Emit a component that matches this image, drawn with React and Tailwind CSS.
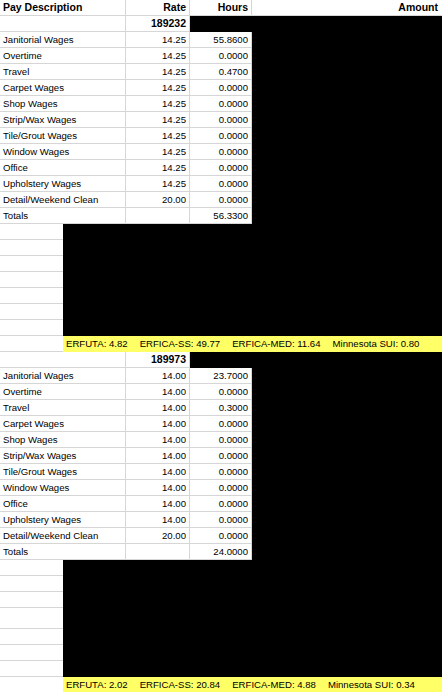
import React from "react"

const items = [
  "Janitorial Wages",
  "Overtime",
  "Travel",
  "Carpet Wages",
  "Shop Wages",
  "Strip/Wax Wages",
  "Tile/Grout Wages",
  "Window Wages",
  "Office",
  "Upholstery Wages",
  "Detail/Weekend Clean",
]

const employees = [
  {
    id: "189232",
    rate: "14.25",
    hours: ["55.8600", "0.0000", "0.4700", "0.0000", "0.0000", "0.0000", "0.0000", "0.0000", "0.0000", "0.0000", "0.0000"],
    total: "56.3300",
    blanks: [16, 16, 16, 16, 16, 16, 16],
    taxes: ["ERFUTA: 4.82", "ERFICA-SS: 49.77", "ERFICA-MED: 11.64", "Minnesota SUI: 0.80"],
  },
  {
    id: "189973",
    rate: "14.00",
    hours: ["23.7000", "0.0000", "0.3000", "0.0000", "0.0000", "0.0000", "0.0000", "0.0000", "0.0000", "0.0000", "0.0000"],
    total: "24.0000",
    blanks: [16, 16, 16, 21, 16, 16, 16],
    taxes: ["ERFUTA: 2.02", "ERFICA-SS: 20.84", "ERFICA-MED: 4.88", "Minnesota SUI: 0.34"],
  },
]

const cell = "h-full border-b border-r border-[#d6d6d6] px-[3px] flex items-center"

function Row({ children }) {
  return <div className="flex h-4 leading-none">{children}</div>
}

function Block({ emp }) {
  return (
    <>
      <Row>
        <div className={`${cell} w-[126px]`}></div>
        <div className={`${cell} w-[64px] justify-end font-bold text-[10.5px]`}>{emp.id}</div>
        <div className="h-full w-[252px] bg-black"></div>
      </Row>
      {items.map((name, i) => (
        <Row key={name}>
          <div className={`${cell} w-[126px]`}>{name}</div>
          <div className={`${cell} w-[64px] justify-end`}>
            {i === items.length - 1 ? "20.00" : emp.rate}
          </div>
          <div className={`${cell} w-[62px] justify-end`}>{emp.hours[i]}</div>
          <div className="h-full w-[190px] bg-black"></div>
        </Row>
      ))}
      <Row>
        <div className={`${cell} w-[126px]`}>Totals</div>
        <div className={`${cell} w-[64px]`}></div>
        <div className={`${cell} w-[62px] justify-end`}>{emp.total}</div>
        <div className="h-full w-[190px] bg-black"></div>
      </Row>
      {emp.blanks.map((h, i) => (
        <div key={i} className="flex" style={{ height: h }}>
          <div className="h-full w-[63px] border-b border-[#d6d6d6]"></div>
          <div className="h-full flex-1 bg-black"></div>
        </div>
      ))}
      <Row>
        <div className="h-full w-[63px] border-b border-[#d6d6d6]"></div>
        <div className="h-full flex-1 bg-[#ffff66] flex items-center gap-[12px] pl-[3px] whitespace-nowrap">
          {emp.taxes.map((t) => (
            <span key={t}>{t}</span>
          ))}
        </div>
      </Row>
    </>
  )
}

export default function App() {
  return (
    <div
      className="w-[442px] h-[692px] overflow-hidden bg-white text-black text-[9.6px]"
      style={{ fontFamily: '"Liberation Sans", Arial, sans-serif' }}
    >
      <Row>
        <div className={`${cell} w-[126px] font-bold text-[10.5px]`}>Pay Description</div>
        <div className={`${cell} w-[64px] justify-end font-bold text-[10.5px]`}>Rate</div>
        <div className={`${cell} w-[62px] justify-end font-bold text-[10.5px]`}>Hours</div>
        <div className="h-full w-[190px] border-b border-[#d6d6d6] px-[4px] flex items-center justify-end font-bold text-[10.5px]">
          Amount
        </div>
      </Row>
      {employees.map((emp) => (
        <Block key={emp.id} emp={emp} />
      ))}
    </div>
  )
}
